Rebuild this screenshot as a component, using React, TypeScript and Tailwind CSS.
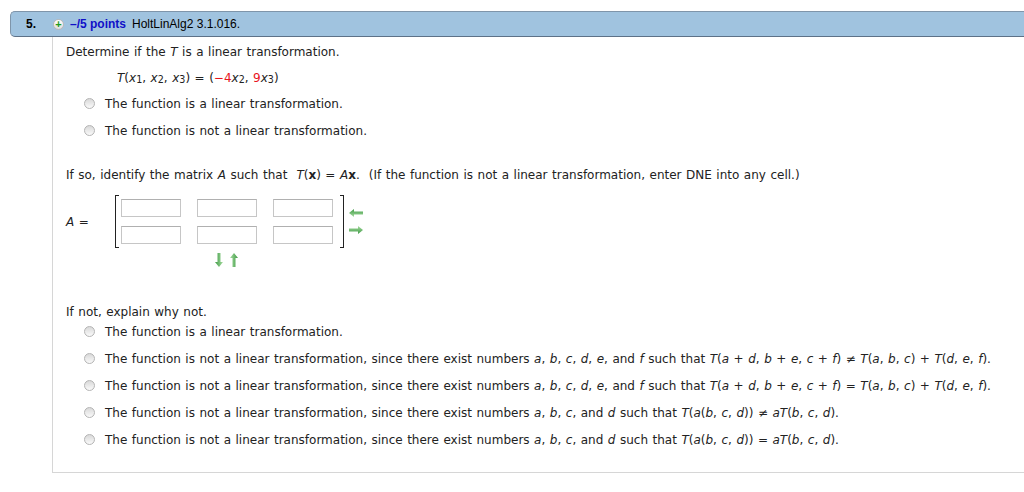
import React from "react";

const I: React.FC<{ children: React.ReactNode }> = ({ children }) => (
  <span className="italic">{children}</span>
);

const Radio = () => (
  <span className="inline-block w-[11px] h-[11px] rounded-full border border-[#b4b4b4] bg-gradient-to-b from-[#d9d9d9] to-[#fafafa] shrink-0" />
);

const Option: React.FC<{ children: React.ReactNode }> = ({ children }) => (
  <div className="h-[27px] flex items-center pl-[18px]">
    <Radio />
    <span className="ml-[10px] whitespace-nowrap">{children}</span>
  </div>
);

const GreenArrow: React.FC<{ dir: "left" | "right" | "up" | "down" }> = ({ dir }) => {
  const rot = { right: 0, down: 90, left: 180, up: 270 }[dir];
  return (
    <svg width="14" height="8" viewBox="0 0 14 8" style={{ transform: `rotate(${rot}deg)` }}>
      <defs>
        <linearGradient id={`g-${dir}`} x1="0" y1="0" x2="0" y2="1">
          <stop offset="0" stopColor="#a6dca0" />
          <stop offset="1" stopColor="#3f9a45" />
        </linearGradient>
      </defs>
      <path d="M0 2.5 H9 V0 L14 4 L9 8 V5.5 H0 Z" fill={`url(#g-${dir})`} />
    </svg>
  );
};

const Cell = () => (
  <div className="w-[60px] h-[18px] border border-[#c6c6c6] border-t-[#b0b0b0] bg-white" />
);

export default function App() {
  return (
    <div className="w-[1024px] h-[492px] bg-white overflow-hidden font-['Verdana','DejaVu_Sans',sans-serif] text-[12px] text-[#222] [word-spacing:0.7px]">
      {/* header bar */}
      <div className="pt-[11px] pl-[10px]">
        <div className="h-[26px] flex items-center rounded-l-[5px] border border-r-0 border-[#7f95aa] border-b-[#5d7187] bg-[#a0c3df] font-['Liberation_Sans',Arial,sans-serif] text-[12px] text-black [word-spacing:0px]">
          <span className="w-[42px] pl-[15px] font-bold">5.</span>
          <span className="w-[11px] h-[11px] rounded-full border border-[#b9b9b9] bg-gradient-to-b from-white to-[#dcdcdc] flex items-center justify-center text-[#1e9a1e] text-[11px] font-bold leading-none">
            +
          </span>
          <span className="ml-[6px] font-bold text-[#1010c8]">–/5 points</span>
          <span className="ml-[6px]">HoltLinAlg2 3.1.016.</span>
        </div>
      </div>

      {/* content */}
      <div className="ml-[52px] h-[436px] border-l border-b border-[#d6d6d6] pl-[13px] pt-[7px]">
        <div className="h-[16px] flex items-center">
          Determine if the&nbsp;<I>T</I>&nbsp;is a linear transformation.
        </div>
        <div className="h-[16px] mt-[10px] flex items-center pl-[51px] whitespace-pre [&_sub]:text-[80%]">
          <I>T</I>(<I>x</I><sub>1</sub>{", "}<I>x</I><sub>2</sub>{", "}<I>x</I><sub>3</sub>{") = ("}
          <span className="text-[#e8141c]">−4</span><I>x</I><sub>2</sub>{", "}
          <span className="text-[#e8141c]">9</span><I>x</I><sub>3</sub>)
        </div>
        <div className="mt-[4px]">
          <Option>The function is a linear transformation.</Option>
          <Option>The function is not a linear transformation.</Option>
        </div>

        <div className="h-[16px] mt-[23px] flex items-center whitespace-nowrap">
          If so, identify the matrix&nbsp;<I>A</I>&nbsp;such that&nbsp;&nbsp;<I>T</I>(<b>x</b>) =&nbsp;<I>A</I>
          <b>x</b>.&nbsp;&nbsp;(If the function is not a linear transformation, enter DNE into any cell.)
        </div>

        {/* matrix */}
        <div className="mt-[12px] flex items-center h-[53px]">
          <div className="w-[49px]">
            <I>A</I> =
          </div>
          <div className="w-[4px] h-[53px] border-l border-y border-[#222]" />
          <div className="ml-[2px] grid grid-cols-3 gap-x-[16px] gap-y-[9px]">
            <Cell />
            <Cell />
            <Cell />
            <Cell />
            <Cell />
            <Cell />
          </div>
          <div className="ml-[7px] w-[4px] h-[53px] border-r border-y border-[#222]" />
          <div className="ml-[5px] flex flex-col gap-[9px] mt-[-1px]">
            <GreenArrow dir="left" />
            <GreenArrow dir="right" />
          </div>
        </div>
        <div className="flex gap-[1px] pl-[146px] mt-[4px] h-[15px] items-center">
          <GreenArrow dir="down" />
          <GreenArrow dir="up" />
        </div>

        <div className="h-[12px] mt-[39px] flex items-center">If not, explain why not.</div>
        <div>
          <Option>The function is a linear transformation.</Option>
          <Option>
            The function is not a linear transformation, since there exist numbers <I>a</I>, <I>b</I>,{" "}
            <I>c</I>, <I>d</I>, <I>e</I>, and <I>f</I> such that <I>T</I>(<I>a</I> + <I>d</I>, <I>b</I> +{" "}
            <I>e</I>, <I>c</I> + <I>f</I>) ≠ <I>T</I>(<I>a</I>, <I>b</I>, <I>c</I>) + <I>T</I>(<I>d</I>,{" "}
            <I>e</I>, <I>f</I>).
          </Option>
          <Option>
            The function is not a linear transformation, since there exist numbers <I>a</I>, <I>b</I>,{" "}
            <I>c</I>, <I>d</I>, <I>e</I>, and <I>f</I> such that <I>T</I>(<I>a</I> + <I>d</I>, <I>b</I> +{" "}
            <I>e</I>, <I>c</I> + <I>f</I>) = <I>T</I>(<I>a</I>, <I>b</I>, <I>c</I>) + <I>T</I>(<I>d</I>,{" "}
            <I>e</I>, <I>f</I>).
          </Option>
          <Option>
            The function is not a linear transformation, since there exist numbers <I>a</I>, <I>b</I>,{" "}
            <I>c</I>, and <I>d</I> such that <I>T</I>(<I>a</I>(<I>b</I>, <I>c</I>, <I>d</I>)) ≠ <I>aT</I>(
            <I>b</I>, <I>c</I>, <I>d</I>).
          </Option>
          <Option>
            The function is not a linear transformation, since there exist numbers <I>a</I>, <I>b</I>,{" "}
            <I>c</I>, and <I>d</I> such that <I>T</I>(<I>a</I>(<I>b</I>, <I>c</I>, <I>d</I>)) = <I>aT</I>(
            <I>b</I>, <I>c</I>, <I>d</I>).
          </Option>
        </div>
      </div>
    </div>
  );
}
